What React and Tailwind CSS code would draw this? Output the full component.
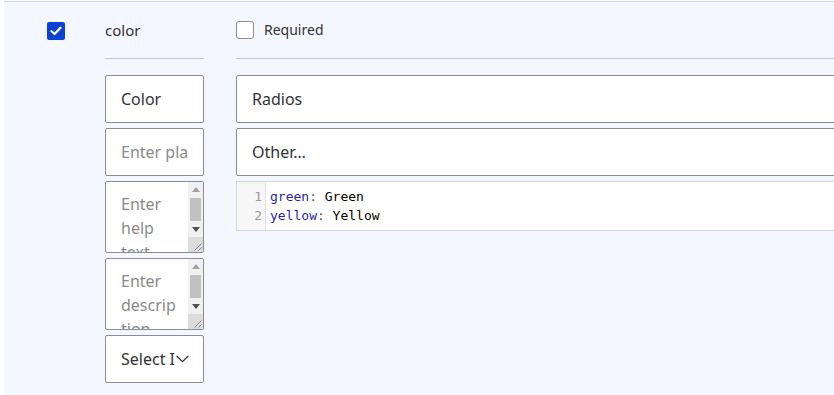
import React from "react";

const sans = { fontFamily: '"Noto Sans", "Open Sans", sans-serif' };

function Chevron() {
  return (
    <svg width="13" height="8" viewBox="0 0 13 8" fill="none" stroke="#333" strokeWidth="1.3" strokeLinecap="round" strokeLinejoin="round">
      <path d="M1 1.2 L6.5 6.6 L12 1.2" />
    </svg>
  );
}

function FakeScrollbar() {
  return (
    <div className="absolute top-[1px] right-[1px] bottom-[1px] w-[15px] flex flex-col pointer-events-none">
      <div className="h-[15px] bg-[#f1f1f1] flex items-center justify-center">
        <svg width="8" height="5" viewBox="0 0 8 5"><path d="M0 5 L4 0 L8 5 Z" fill="#a3a3a3" /></svg>
      </div>
      <div className="h-[25px] bg-[#f1f1f1] px-[2px] py-[1px]">
        <div className="h-full bg-[#c1c1c1]" />
      </div>
      <div className="h-[15px] bg-[#f1f1f1] flex items-center justify-center">
        <svg width="8" height="5" viewBox="0 0 8 5"><path d="M0 0 L8 0 L4 5 Z" fill="#505050" /></svg>
      </div>
      <div className="h-[15px] bg-[#dcdcdc] flex items-end justify-end">
        <svg width="15" height="15" viewBox="0 0 15 15" stroke="#8a8a8a" strokeWidth="1">
          <path d="M13.5 6.5 L6.5 13.5" />
          <path d="M13.5 10.5 L10.5 13.5" />
        </svg>
      </div>
    </div>
  );
}

function TextArea({ placeholder }) {
  return (
    <div className="relative h-[72px] w-full">
      <textarea
        className="h-[72px] w-full bg-white border border-[#8c8c92] rounded-[2px] pl-[15px] pr-[22px] pt-[10px] text-[16px] leading-[24px] placeholder:text-[#8a8a8a] overflow-hidden resize-none outline-none block"
        placeholder={placeholder}
        style={sans}
      />
      <FakeScrollbar />
    </div>
  );
}

export default function App() {
  return (
    <div className="w-[834px] h-[395px] bg-white overflow-hidden text-[#333]" style={sans}>
      <div className="ml-[4px] mt-[1px] w-[900px] h-[394px] bg-[#f4f7fe] border-t border-[#d2d4dc] flex pl-[43px]">
        {/* checkbox column */}
        <div className="w-[58px] shrink-0 pt-[20px]">
          <div className="w-[18px] h-[18px] rounded-[2px] bg-[#0b42d1] flex items-center justify-center">
            <svg width="12" height="10" viewBox="0 0 12 10" fill="none" stroke="white" strokeWidth="2.2" strokeLinecap="round" strokeLinejoin="round">
              <path d="M1.5 5.2 L4.6 8 L10.5 1.8" />
            </svg>
          </div>
        </div>
        {/* column 2 */}
        <div className="w-[99px] shrink-0 flex flex-col">
          <div className="h-[57px] flex items-center border-b border-[#c5c8d0]">
            <span className="text-[15px] leading-none">color</span>
          </div>
          <div className="mt-[16px] flex flex-col gap-[5px]">
            <div className="h-[48px] bg-white border border-[#8c8c92] rounded-[2px] flex items-center pl-[15px] text-[16px]">Color</div>
            <input
              className="h-[48px] w-full bg-white border border-[#8c8c92] rounded-[2px] pl-[15px] pr-[15px] text-[16px] placeholder:text-[#8a8a8a] outline-none"
              placeholder="Enter placeholder"
              style={sans}
            />
            <TextArea placeholder="Enter help text" />
            <TextArea placeholder="Enter description" />
            <div className="h-[48px] bg-white border border-[#8c8c92] rounded-[2px] flex items-center pl-[15px] text-[16px] overflow-hidden">
              <span className="w-[54px] shrink-0 overflow-hidden whitespace-nowrap">Select Input</span>
              <span className="ml-[1px] flex"><Chevron /></span>
            </div>
          </div>
        </div>
        {/* column 3 */}
        <div className="ml-[32px] flex-1 flex flex-col">
          <div className="h-[57px] flex items-center border-b border-[#c5c8d0]">
            <div className="w-[18px] h-[18px] rounded-[3px] bg-white border border-[#8c8c92]" />
            <span className="ml-[10px] text-[14px] leading-none">Required</span>
          </div>
          <div className="mt-[16px] flex flex-col gap-[5px]">
            <div className="h-[48px] bg-white border border-[#8c8c92] rounded-[2px] flex items-center pl-[15px] text-[16px]">Radios</div>
            <div className="h-[48px] bg-white border border-[#8c8c92] rounded-[2px] flex items-center pl-[15px] text-[16px]">Other…</div>
            <div className="h-[50px] bg-white border border-[#d4d4d4] flex text-[13px] leading-[19px]" style={{ fontFamily: '"DejaVu Sans Mono", monospace' }}>
              <div className="w-[29px] bg-[#f7f7f7] border-r border-[#e2e2e2] text-right pr-[3px] pt-[5px] text-[#999]">
                <div>1</div>
                <div>2</div>
              </div>
              <div className="pl-[4px] pt-[5px] text-black">
                <div><span className="text-[#2a1fb0]">green</span><span className="text-[#555]">:</span> Green</div>
                <div><span className="text-[#2a1fb0]">yellow</span><span className="text-[#555]">:</span> Yellow</div>
              </div>
            </div>
          </div>
        </div>
      </div>
    </div>
  );
}
